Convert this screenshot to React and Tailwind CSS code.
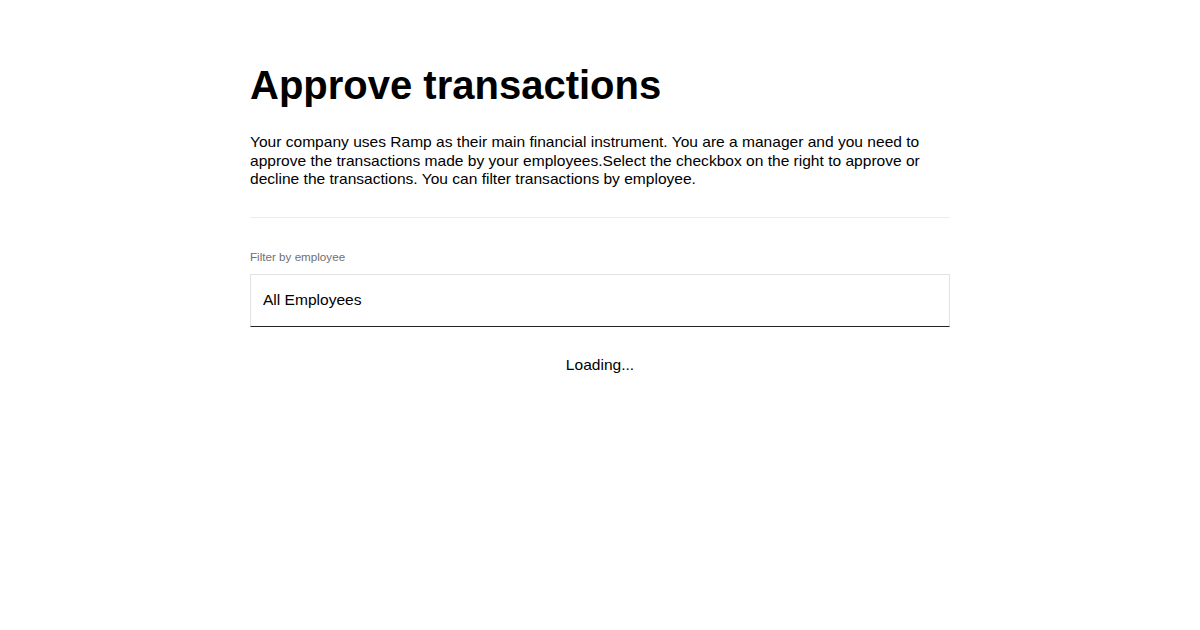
export default function App() {
  return (
    <div className="min-h-screen bg-white text-black font-['Liberation_Sans',Arial,sans-serif]">
      <main className="w-[700px] mx-auto pt-[62px]">
        <h1 className="text-[40px] leading-[46px] font-bold">Approve transactions</h1>

        <p className="mt-[25px] text-[15.55px] leading-[18.5px]">
          Your company uses Ramp as their main financial instrument. You are a manager and you need to
          approve the transactions made by your employees.Select the checkbox on the right to approve or
          decline the transactions. You can filter transactions by employee.
        </p>

        <hr className="mt-[28px] border-0 border-t border-[#ececec]" />

        <label className="block mt-[32px] text-[11.65px] leading-[14px] text-[#707070]">Filter by employee</label>

        <div className="mt-[10px] h-[53px] flex items-center px-3 border border-[#e2e2e2] border-b-[#222222]">
          <span className="text-[15.55px]">All Employees</span>
        </div>

        <div className="mt-[29px] text-center text-[15.55px] leading-[18px]">Loading...</div>
      </main>
    </div>
  );
}
